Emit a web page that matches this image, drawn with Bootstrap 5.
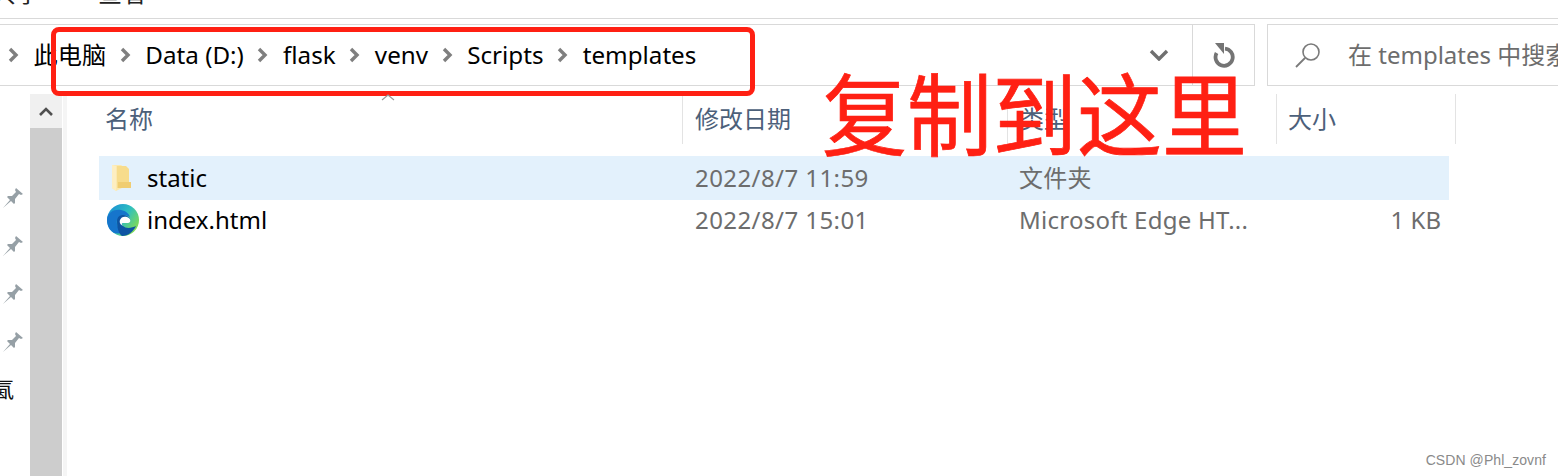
<!DOCTYPE html>
<html lang="zh">
<head>
<meta charset="utf-8">
<link href="https://cdn.jsdelivr.net/npm/bootstrap@5.3.0/dist/css/bootstrap.min.css" rel="stylesheet">
<style>
html,body{height:100%;}
body{margin:0;background:#fff;overflow:hidden;font-family:"Noto Sans","Noto Sans CJK SC",sans-serif;color:#000;}
.shot{position:relative;width:1558px;height:476px;overflow:hidden;}
.menu-strip{height:19px;overflow:hidden;border-bottom:1px solid #d9d9d9;font-size:24px;line-height:32px;color:#222;}
.menu-strip span{display:block;margin-top:-23px;}
.menu-strip .m1{margin-left:-8px;width:106px;}
.addr-row{height:62px;margin-top:5px;}
.addr-box{width:1255px;border:1px solid #d9d9d9;border-left:0;}
.crumbs{font-size:24.2px;gap:13.6px;padding-left:8px;}
.crumbs svg{flex:none;}
.addr-drop{width:66px;}
.addr-refresh{width:62px;border-left:1px solid #d9d9d9;}
.search-box{margin-left:12px;flex:1;border:1px solid #d9d9d9;border-right:0;font-size:24px;color:#6d6d6d;white-space:nowrap;overflow:hidden;padding-left:27px;gap:27px;}
.search-box svg{flex:none;}
.main-row{height:390px;padding-top:8px;}
.side-pane{width:30px;flex:none;}
.pin-list{padding-top:94px;gap:28px;padding-left:3px;}
.pin-list svg{flex:none;}
.side-glyph{font-size:22px;line-height:30px;margin-left:-8px;margin-top:21px;color:#111;}
.scroll-track{width:32px;flex:none;background:#cdcdcd;}
.scroll-btn{height:34px;background:#f0f0f0;}
.scroll-edge{width:4px;flex:none;background:#f5f5f5;margin-left:1px;}
.file-pane{flex:1;padding-left:32px;}
.head-row{height:50px;font-size:24px;color:#4c607a;}
.cell-name{width:583px;padding-left:6px;}
.cell-date{width:325px;padding-left:12px;}
.cell-type{width:269px;padding-left:12px;}
.cell-size{width:180px;padding-left:11px;}
.head-row .cell-date,.head-row .cell-type,.head-row .cell-size{border-left:1px solid #e3e3e3;}
.head-row .cell-size{border-right:1px solid #e3e3e3;}
.file-rows{margin-top:12px;width:1350px;font-size:24px;}
.file-line{height:44px;}
.file-line.picked{background:#e3f1fc;}
.file-line.plain{height:39px;}
.cell-main{width:584px;padding-left:8px;gap:8px;color:#000;}
.cell-main svg{flex:none;}
.dim{color:#6d6d6d;}
.cell-d2{width:324px;padding-left:12px;letter-spacing:.42px;}
.cell-t2{width:270px;padding-left:12px;white-space:nowrap;letter-spacing:.25px;}
.cell-s2{flex:1;text-align:right;padding-right:8px;}
.anno-box{position:absolute;left:51px;top:27px;width:704px;height:69px;border:5px solid #ff2013;border-radius:8px;}
.anno-text{position:absolute;left:822px;top:54px;font-size:85px;font-weight:400;-webkit-text-stroke:.7px #ff2013;line-height:116px;color:#ff2013;font-family:"Noto Sans CJK SC",sans-serif;white-space:nowrap;transform:scaleY(1.05);transform-origin:50% 88%;}
.sort-mark{position:absolute;left:381px;top:93px;}
.mark-csdn{position:absolute;right:12px;top:451px;font-size:14px;letter-spacing:.07px;line-height:18px;color:#8a8a8a;font-family:"Liberation Sans",sans-serif;}
</style>
</head>
<body>
<div class="shot">
  <div class="menu-strip d-flex">
    <span class="m1">共享</span><span>查看</span>
  </div>
  <div class="addr-row d-flex">
    <div class="addr-box d-flex align-items-center">
      <div class="crumbs d-flex align-items-center flex-grow-1">
        <svg width="12" height="16" viewBox="0 0 12 16"><path d="M2 2l6 6-6 6" fill="none" stroke="#7f7f7f" stroke-width="3.4"/></svg>
        <span>此电脑</span>
        <svg width="12" height="16" viewBox="0 0 12 16"><path d="M2 2l6 6-6 6" fill="none" stroke="#7f7f7f" stroke-width="3.4"/></svg>
        <span>Data (D:)</span>
        <svg width="12" height="16" viewBox="0 0 12 16"><path d="M2 2l6 6-6 6" fill="none" stroke="#7f7f7f" stroke-width="3.4"/></svg>
        <span>flask</span>
        <svg width="12" height="16" viewBox="0 0 12 16"><path d="M2 2l6 6-6 6" fill="none" stroke="#7f7f7f" stroke-width="3.4"/></svg>
        <span>venv</span>
        <svg width="12" height="16" viewBox="0 0 12 16"><path d="M2 2l6 6-6 6" fill="none" stroke="#7f7f7f" stroke-width="3.4"/></svg>
        <span>Scripts</span>
        <svg width="12" height="16" viewBox="0 0 12 16"><path d="M2 2l6 6-6 6" fill="none" stroke="#7f7f7f" stroke-width="3.4"/></svg>
        <span>templates</span>
      </div>
      <div class="addr-drop d-flex justify-content-center align-items-center">
        <svg width="20" height="12" viewBox="0 0 20 12"><path d="M2 2l8 8 8-8" fill="none" stroke="#6f6f6f" stroke-width="3.4"/></svg>
      </div>
      <div class="addr-refresh h-100 d-flex justify-content-center align-items-center">
        <svg width="24" height="26" viewBox="0 0 24 26"><path d="M13 6.6A8.6 8.6 0 1 1 4.6 11" fill="none" stroke="#747474" stroke-width="3.8"/><path d="M3 1h9v11z" fill="#747474"/></svg>
      </div>
    </div>
    <div class="search-box d-flex align-items-center">
      <svg width="26" height="26" viewBox="0 0 26 26"><circle cx="16" cy="10" r="8" fill="none" stroke="#7a7a7a" stroke-width="1.6"/><path d="M10 16L1 25" stroke="#7a7a7a" stroke-width="1.8"/></svg>
      <span>在 templates 中搜索</span>
    </div>
  </div>
  <div class="main-row d-flex">
    <div class="side-pane overflow-hidden">
      <div class="pin-list d-flex flex-column">
        <svg width="20" height="20" viewBox="0 0 20 20"><path d="M0 20l7-8-3-3 1-1 4 0 4-4-1-2 1-2 7 6-2 1-2-1-4 5 0 4-1 1-3-3z" fill="#96a0a6"/></svg>
        <svg width="20" height="20" viewBox="0 0 20 20"><path d="M0 20l7-8-3-3 1-1 4 0 4-4-1-2 1-2 7 6-2 1-2-1-4 5 0 4-1 1-3-3z" fill="#96a0a6"/></svg>
        <svg width="20" height="20" viewBox="0 0 20 20"><path d="M0 20l7-8-3-3 1-1 4 0 4-4-1-2 1-2 7 6-2 1-2-1-4 5 0 4-1 1-3-3z" fill="#96a0a6"/></svg>
        <svg width="20" height="20" viewBox="0 0 20 20"><path d="M0 20l7-8-3-3 1-1 4 0 4-4-1-2 1-2 7 6-2 1-2-1-4 5 0 4-1 1-3-3z" fill="#96a0a6"/></svg>
      </div>
      <div class="side-glyph">氤</div>
    </div>
    <div class="scroll-track">
      <div class="scroll-btn d-flex justify-content-center align-items-center">
        <svg width="14" height="9" viewBox="0 0 14 9"><path d="M1 8l6-6 6 6" fill="none" stroke="#505050" stroke-width="2.6"/></svg>
      </div>
    </div>
    <div class="scroll-edge"></div>
    <div class="file-pane">
      <div class="head-row d-flex">
        <div class="cell-name d-flex align-items-center">名称</div>
        <div class="cell-date d-flex align-items-center">修改日期</div>
        <div class="cell-type d-flex align-items-center">类型</div>
        <div class="cell-size d-flex align-items-center">大小</div>
      </div>
      <div class="file-rows">
        <div class="file-line picked d-flex align-items-center">
          <div class="cell-main d-flex align-items-center">
            <svg width="32" height="32" viewBox="0 0 32 32"><path d="M5 3h9l3 2v20l-8 4-4-3z" fill="#fbe9b0"/><path d="M10 4h9l3 3v19H10z" fill="#f7dc8c"/><path d="M11 20h13v6H11z" fill="#f0cd72"/><path d="M5 3l4 1v25l-4-3z" fill="#fdeec2"/></svg>
            <span>static</span>
          </div>
          <div class="cell-d2 dim">2022/8/7 11:59</div>
          <div class="cell-t2 dim">文件夹</div>
        </div>
        <div class="file-line plain d-flex align-items-center">
          <div class="cell-main d-flex align-items-center">
            <svg width="32" height="32" viewBox="0 0 32 32"><defs><linearGradient id="eg" x1="0" y1="0" x2="1" y2=".7"><stop offset="0" stop-color="#1687d9"/><stop offset=".55" stop-color="#2fbfc0"/><stop offset="1" stop-color="#86dc4e"/></linearGradient></defs><circle cx="16" cy="16" r="16" fill="url(#eg)"/><path d="M0 16C0 8 8 5 14 6c5 1 8 4 9 7-5-3-11-2-13 3-1 5 2 10 6 12C7 33 0 25 0 16z" fill="#1675cc"/><path d="M10 17c0-4 3-6 6-6 3 0 6 2 7 4 1 2-1 4-4 4h-3c-1 0-2 1 0 3 3 3 9 2 13 0-3 6-8 10-14 10-4-3-5-10-5-15z" fill="#0e54a3"/><path d="M13 16c1-3 4-4 7-3 3 1 4 3 3 5-1 1-2 1-4 1h-3c-1 0-2 1 0 3-2-1-4-3-3-6z" fill="#fff"/></svg>
            <span>index.html</span>
          </div>
          <div class="cell-d2 dim">2022/8/7 15:01</div>
          <div class="cell-t2 dim">Microsoft Edge HT...</div>
          <div class="cell-s2 dim">1 KB</div>
        </div>
      </div>
    </div>
  </div>
  <div class="anno-box"></div>
  <div class="anno-text">复制到这里</div>
  <svg class="sort-mark" width="14" height="8" viewBox="0 0 14 8"><path d="M1 7l6-5 6 5" fill="none" stroke="#9a9a9a" stroke-width="1.2"/></svg>
  <div class="mark-csdn">CSDN @Phl_zovnf</div>
</div>
<script src="https://cdn.jsdelivr.net/npm/bootstrap@5.3.0/dist/js/bootstrap.bundle.min.js"></script>
</body>
</html>
